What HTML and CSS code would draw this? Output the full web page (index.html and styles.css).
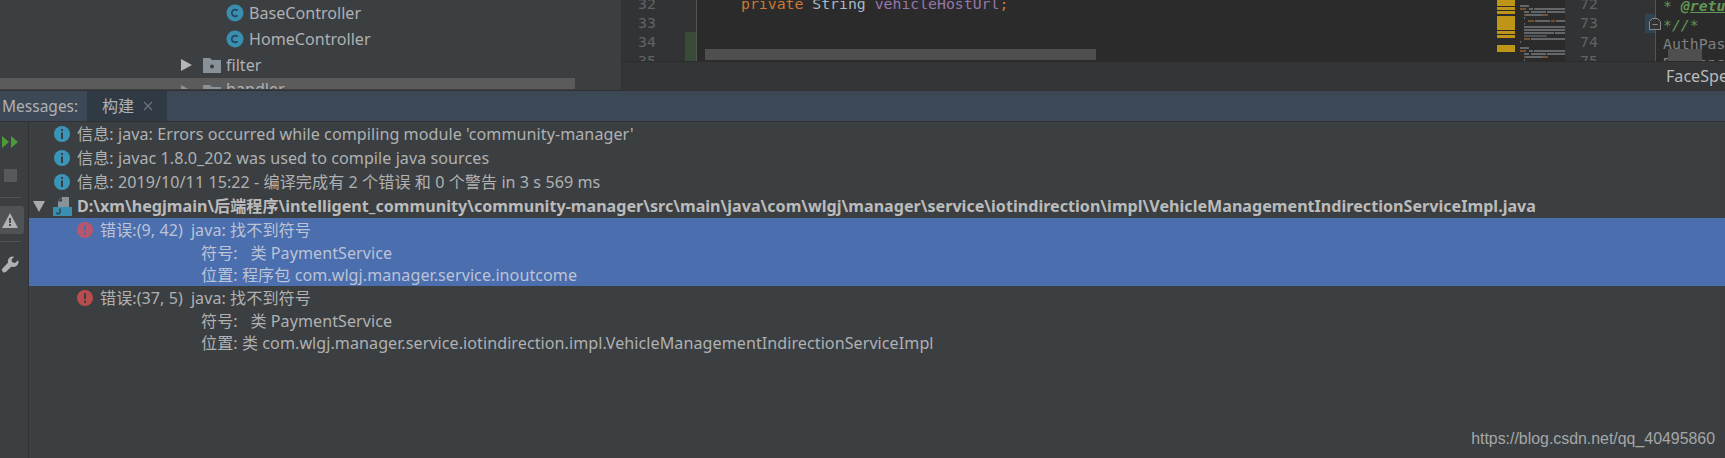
FILE: index.html
```html
<!DOCTYPE html>
<html lang="zh">
<head>
<meta charset="utf-8">
<title>Messages</title>
<link rel="stylesheet" href="styles.css">
</head>
<body>
<div class="top">
  <section class="tree">
    <div class="tree-row d3"><svg class="cicon" viewBox="0 0 18 18"><circle cx="9" cy="9" r="8.5" fill="#3a8fb0"/><path d="M11.6 6.6a3.4 3.4 0 1 0 0 4.8" fill="none" stroke="#24465a" stroke-width="1.7"/></svg><span>BaseController</span></div>
    <div class="tree-row d3"><svg class="cicon" viewBox="0 0 18 18"><circle cx="9" cy="9" r="8.5" fill="#3a8fb0"/><path d="M11.6 6.6a3.4 3.4 0 1 0 0 4.8" fill="none" stroke="#24465a" stroke-width="1.7"/></svg><span>HomeController</span></div>
    <div class="tree-row d2"><svg class="arrow" viewBox="0 0 11 12"><path d="M0 0l11 6-11 6z" fill="#b3b6b8"/></svg><svg class="folder" viewBox="0 0 18 15"><path d="M0 0h7l2 2h9v13H0z" fill="#8a9299"/><circle cx="9" cy="8.500" r="2" fill="#3c3f41"/></svg><span>filter</span></div>
    <div class="tree-row d2 selected"><svg class="arrow" viewBox="0 0 11 12"><path d="M0 0l11 6-11 6z" fill="#8f9294"/></svg><svg class="folder" viewBox="0 0 18 15"><path d="M0 0h7l2 2h9v13H0z" fill="#8a9299"/></svg><span class="clipped">handler</span></div>
  </section>
  <section class="mid">
    <div class="editor">
      <div class="gutter">
        <span class="ln">32</span><span class="ln">33</span><span class="ln">34</span><span class="ln">35</span>
        <i class="change"></i>
      </div>
      <div class="code">
        <div class="code-line"><b class="kw">private</b> <b class="ty">String</b> <b class="fd">vehicleHostUrl</b><b class="kw">;</b></div>
        <i class="hscroll"></i>
      </div>
      <div class="marks">
        <i class="m m1"></i><i class="m m2"></i><i class="m m3"></i><i class="m m4"></i><i class="m m5"></i><i class="m m6"></i><i class="m m7"></i>
      </div>
      <svg class="mini" viewBox="0 0 50 61">
        <path fill="#646769" d="M5 5h9v2H5zM14 8h4v2h-4zM19 8h31v2H19zM9 11h5v2H9zM16 11h15v2H16zM32 11h18v2H32zM11 14h17v2H11zM9 17h1v2H9zM20 20h15v2H20zM41 20h9v2h-9zM9 23h1v2H9zM9 26h41v2H9zM9 29h41v2H9zM9 32h30v2H9zM40 32h10v2H40zM16 38h34v2H16zM5 41h1v2H5zM5 47h9v2H5zM14 50h4v2h-4zM19 50h31v2H19zM9 53h5v2H9zM16 53h15v2H16zM32 53h18v2H32zM11 56h17v2H11zM9 59h1v2H9z"/>
        <path fill="#77502f" d="M5 8h6v2H5zM9 14h2v2H9zM28 14h5v2h-5zM13 20h6v2h-6zM36 20h4v2h-4zM9 38h6v2H9zM5 50h6v2H5zM9 56h2v2H9zM28 56h5v2h-5z"/>
        <path fill="#505254" d="M9 35h23v2H9z"/>
      </svg>
    </div>
    <div class="strip"></div>
  </section>
  <section class="right">
    <div class="editor2">
      <div class="gutter2">
        <span class="ln">72</span><span class="ln">73</span><span class="ln">74</span><span class="ln">75</span>
        <i class="foldbg"></i>
        <svg class="fold" viewBox="0 0 12 12"><path d="M.5 3.500L3.500.5h5L11.500 3.500v8H.5z" fill="#313335" stroke="#8a8a8a"/><path d="M3.500 6.500h5" stroke="#8a8a8a"/></svg>
      </div>
      <div class="code2">
        <div class="code-line2"><b class="doc">* <u class="tag">@retu</u></b></div>
        <div class="code-line2"><b class="doc">*//*</b></div>
        <div class="code-line2"><b class="gr">AuthPas</b></div>
        <div class="code-line2"><b class="gr">Respons</b></div>
        <i class="blob"></i>
      </div>
    </div>
    <div class="strip strip2"><span>FaceSpe</span></div>
  </section>
</div>

<div class="tabbar">
  <span class="tab-label">Messages:</span>
  <span class="tab">构建<svg class="close" viewBox="0 0 10 10"><path d="M1 1l8 8M9 1l-8 8" stroke="#6d7680" stroke-width="1.100"/></svg></span>
</div>

<div class="main">
  <aside class="side">
    <svg class="play" viewBox="0 0 16 12"><path d="M0 0l7 6-7 6zM9 0l7 6-7 6z" fill="#4c9a3b"/></svg>
    <i class="stop"></i>
    <i class="sep"></i>
    <span class="warnbox"><svg viewBox="0 0 16 15"><path d="M8 0l8 15H0z" fill="#afb1b3"/><path d="M7 5h2v5H7zM7 11h2v2H7z" fill="#4a4d4f"/></svg></span>
    <i class="sep sep2"></i>
    <svg class="wrench" viewBox="0 0 18 18"><path d="M17 4.500l-3.200 3-3-.8-.8-3L13 .8A5 5 0 0 0 6.500 7L.8 13a2.400 2.400 0 0 0 3.500 3.600L10.200 11A5 5 0 0 0 17 4.500z" fill="#afb1b3"/></svg>
  </aside>
  <div class="log">
    <div class="row info"><svg class="ic" viewBox="0 0 16 16"><circle cx="8" cy="8" r="8" fill="#3a95b8"/><path d="M7 3h2v2H7zM7 6.500h2V13H7z" fill="#3c3f41"/></svg>信息: java: Errors occurred while compiling module 'community-manager'</div>
    <div class="row info"><svg class="ic" viewBox="0 0 16 16"><circle cx="8" cy="8" r="8" fill="#3a95b8"/><path d="M7 3h2v2H7zM7 6.500h2V13H7z" fill="#3c3f41"/></svg>信息: javac 1.8.0_202 was used to compile java sources</div>
    <div class="row info"><svg class="ic" viewBox="0 0 16 16"><circle cx="8" cy="8" r="8" fill="#3a95b8"/><path d="M7 3h2v2H7zM7 6.500h2V13H7z" fill="#3c3f41"/></svg>信息: 2019/10/11 15:22 - 编译完成有 2 个错误 和 0 个警告 in 3 s 569 ms</div>
    <div class="row file"><svg class="tri" viewBox="0 0 12 11"><path d="M0 0h12L6 11z" fill="#a9abad"/></svg><svg class="fileic" viewBox="0 0 19 19"><path d="M9 0h7v10H5V4z" fill="#8a9299"/><path d="M5 4.500h4V.5z" fill="#3c3f41"/><path d="M0 10h19v9H0z" fill="#3a8fb0"/><path d="M7 11.500v4a1.800 1.800 0 0 1-3.500 0" fill="none" stroke="#263f4f" stroke-width="1.400"/></svg><b>D:\xm\hegjmain\后端程序\intelligent_community\community-manager\src\main\java\com\wlgj\manager\service\iotindirection\impl\VehicleManagementIndirectionServiceImpl.java</b></div>
    <div class="err selected-err">
      <div class="row e1"><svg class="ic" viewBox="0 0 16 16"><circle cx="8" cy="8" r="8" fill="#b9566b"/><path d="M7 3h2v6H7zM7 10.500h2v2.500H7z" fill="#4b6eaf"/></svg><span class="pos">错误:(9, 42)</span><span>java: 找不到符号</span></div>
      <div class="row e2">符号:&nbsp;&nbsp; 类 PaymentService</div>
      <div class="row e2">位置: 程序包 com.wlgj.manager.service.inoutcome</div>
    </div>
    <div class="err">
      <div class="row e1"><svg class="ic" viewBox="0 0 16 16"><circle cx="8" cy="8" r="8" fill="#b84c4f"/><path d="M7 3h2v6H7zM7 10.500h2v2.500H7z" fill="#3c3f41"/></svg><span class="pos">错误:(37, 5)</span><span>java: 找不到符号</span></div>
      <div class="row e2">符号:&nbsp;&nbsp; 类 PaymentService</div>
      <div class="row e2">位置: 类 com.wlgj.manager.service.iotindirection.impl.VehicleManagementIndirectionServiceImpl</div>
    </div>
    <div class="watermark">https://blog.csdn.net/qq_40495860</div>
  </div>
</div>
</body>
</html>
```
FILE: styles.css
```css
* { box-sizing: border-box; }
html, body { margin: 0; padding: 0; }
body {
  width: 1725px; height: 458px; overflow: hidden;
  background: #3c3f41; color: #afb1b3;
  font-family: "Noto Sans", "Noto Sans CJK SC", sans-serif;
  font-size: 16.1px;
  display: flex; flex-direction: column;
}
b { font-weight: normal; }
i { display: block; }

.top { height: 91px; display: flex; overflow: hidden; border-bottom: 1px solid #323232; flex: none; }
.tree { width: 622px; flex: none; background: #3c3f41; border-right: 1px solid #323232; overflow: hidden; }
.tree-row { height: 26px; display: flex; align-items: center; white-space: nowrap; }
.d3 { padding-left: 226px; gap: 5px; }
.d2 { padding-left: 181px; }
.selected { width: 575px; background: #5b5b5b; height: 11px; margin-top: 0; align-items: flex-start; padding-top: 7px; overflow: hidden; }
.clipped { margin-top: -7px; }
.cicon { width: 18px; height: 18px; flex: none; }
.arrow { width: 11px; height: 12px; margin-right: 11px; flex: none; }
.folder { width: 18px; height: 15px; margin-right: 5px; flex: none; }

.mid { width: 943px; flex: none; display: flex; flex-direction: column; }
.editor { height: 61px; display: flex; background: #2b2b2b; overflow: hidden; }
.gutter { width: 75px; flex: none; background: #313335; border-right: 1px solid #555; display: flex; flex-direction: column; padding-left: 16px; color: #606366; position: relative; font-family: "DejaVu Sans Mono", monospace; font-size: 14.8px; }
.ln { height: 19px; display: block; line-height: 19px; }
.gutter .ln:first-child, .gutter2 .ln:first-child { margin-top: -6px; }
.change { position: absolute; right: 0; top: 32px; width: 11px; height: 29px; background: #384c38; }
.code { width: 800px; flex: none; padding-left: 44px; font-family: "DejaVu Sans Mono", monospace; font-size: 14.8px; position: relative; }
.code-line { line-height: 19px; margin-top: -6px; white-space: pre; }
.kw { color: #cc7832; }
.ty { color: #a9b7c6; }
.fd { color: #9876aa; }
.hscroll { position: absolute; left: 8px; top: 49px; width: 391px; height: 11px; background: #4f4f4f; }
.marks { width: 18px; flex: none; display: flex; flex-direction: column; }
.m { background: #bf9518; }
.m1 { height: 6px; }
.m2 { height: 3px; margin-top: 1px; }
.m3 { height: 3px; margin-top: 1px; }
.m4 { height: 14px; margin-top: 2px; }
.m5 { height: 3px; margin-top: 1px; }
.m6 { height: 3px; margin-top: 1px; }
.m7 { height: 7px; margin-top: 7px; }
.mini { width: 50px; height: 61px; flex: none; display: block; background: #2b2b2b; }
.strip { height: 29px; background: #333537; border-top: 1px solid #2b2b2b; }

.right { flex: 1; display: flex; flex-direction: column; }
.editor2 { height: 61px; display: flex; background: #2b2b2b; overflow: hidden; }
.gutter2 { width: 91px; flex: none; background: #313335; border-right: 1px solid #555; padding-left: 15px; color: #606366; font-family: "DejaVu Sans Mono", monospace; font-size: 14.8px; display: flex; flex-direction: column; position: relative; }
.foldbg { position: absolute; right: 0; top: 14px; width: 10px; height: 19px; background: #2f4553; }
.fold { position: absolute; right: -6px; top: 18px; width: 12px; height: 12px; }
.code2 { flex: 1; padding-left: 7px; font-family: "DejaVu Sans Mono", monospace; font-size: 14.8px; position: relative; overflow: hidden; }
.code-line2 { height: 19px; line-height: 19px; white-space: pre; }
.code-line2:first-child { margin-top: -4px; }
.doc { color: #629755; font-style: italic; }
.tag { font-weight: 700; }
.gr { color: #808080; }
.blob { position: absolute; left: 12px; top: 49px; width: 34px; height: 12px; background: #4f4f4f; }
.strip2 { padding-left: 101px; display: flex; align-items: center; color: #bbbbbb; white-space: nowrap; overflow: hidden; }

.tabbar { height: 31px; flex: none; background: #3c4856; border-bottom: 1px solid #323232; display: flex; align-items: stretch; line-height: 30px; }
.tab-label { width: 87px; padding-left: 2px; font-size: 15.5px; }
.tab { width: 80px; background: #2f3a44; padding-left: 15px; display: flex; align-items: center; gap: 9px; }
.close { width: 10px; height: 10px; }

.main { flex: 1; display: flex; min-height: 0; }
.side { width: 29px; flex: none; border-right: 1px solid #323232; display: flex; flex-direction: column; align-items: flex-start; }
.play { width: 16px; height: 12px; margin: 14px 0 0 2px; flex: none; }
.stop { width: 13px; height: 13px; background: #59595b; margin: 21px 0 0 4px; }
.sep { width: 21px; height: 1px; background: #505254; margin-top: 15px; }
.warnbox { width: 24px; height: 28px; background: #4f5355; border-radius: 0 3px 3px 0; margin-top: 8px; padding-left: 2px; display: flex; align-items: center; }
.warnbox svg { width: 16px; height: 15px; }
.sep2 { margin-top: 7px; }
.wrench { width: 17px; height: 17px; margin: 14px 0 0 2px; flex: none; }

.log { flex: 1; position: relative; }
.row { height: 24px; padding-bottom: 3px; display: flex; align-items: center; white-space: pre; letter-spacing: 0.06px; }
.info { padding-left: 25px; }
.ic { width: 16px; height: 16px; flex: none; margin: 3px 7px 0 0; }
.file { padding-left: 4px; color: #bbbbbb; letter-spacing: 0.01px; }
.file b { font-weight: 700; }
.tri { width: 12px; height: 11px; margin: 3px 8px 0 0; flex: none; }
.fileic { width: 19px; height: 19px; margin: 3px 5px 0 0; flex: none; }
.err { height: 68px; }
.selected-err { background: #4b6eaf; color: #bbc3d6; }
.e1 { padding-left: 48px; }
.pos { margin-right: 8px; }
.e2 { padding-left: 172px; height: 22px; }
.watermark { position: absolute; right: 10px; top: 308px; font-family: "Liberation Sans", sans-serif; font-size: 15.9px; color: #a5a7a8; }
```
